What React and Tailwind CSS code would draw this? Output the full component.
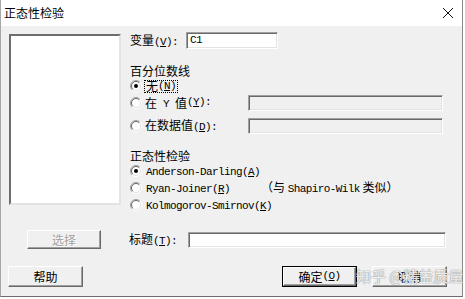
import React from "react";

const CJK = "[font-family:'Noto_Sans_CJK_SC','Liberation_Sans',sans-serif]";
const MONO = "[font-family:'Liberation_Mono','Noto_Sans_CJK_SC',monospace] text-[11px] tracking-[-0.6px]";

function A({ children }) {
  return <span className={MONO}>{children}</span>;
}
function U({ children }) {
  return <span className="underline underline-offset-[1px]">{children}</span>;
}

function Radio({ checked }) {
  return (
    <svg width="12" height="12" viewBox="0 0 12 12" className="shrink-0">
      <circle cx="6" cy="6" r="4.5" fill="#ffffff" />
      <path d="M 2.1 9.9 A 5.5 5.5 0 0 1 9.9 2.1" stroke="#a0a0a0" strokeWidth="1" fill="none" />
      <path d="M 9.9 2.1 A 5.5 5.5 0 0 1 2.1 9.9" stroke="#ffffff" strokeWidth="1" fill="none" />
      <path d="M 2.8 9.2 A 4.5 4.5 0 0 1 9.2 2.8" stroke="#696969" strokeWidth="1" fill="none" />
      <path d="M 9.2 2.8 A 4.5 4.5 0 0 1 2.8 9.2" stroke="#e3e3e3" strokeWidth="1" fill="none" />
      {checked && <circle cx="6" cy="6" r="2" fill="#000" />}
    </svg>
  );
}

const sunken =
  "border border-t-[#a0a0a0] border-l-[#a0a0a0] border-r-white border-b-white shadow-[inset_1px_1px_0_#696969,inset_-1px_-1px_0_#e3e3e3]";

function Btn({ children, w, disabled, def }) {
  const inner = (
    <div
      className={`h-full w-full flex items-center justify-center border border-t-white border-l-white border-r-[#696969] border-b-[#696969] shadow-[inset_-1px_-1px_0_#a0a0a0] bg-[#f0f0f0] text-[12px] ${
        disabled ? "text-[#a0a0a0] [text-shadow:1px_1px_0_#ffffff]" : "text-black"
      }`}
    >
      {children}
    </div>
  );
  return (
    <div className={`${w} h-full ${def ? "border border-black" : ""}`}>{inner}</div>
  );
}

export default function App() {
  return (
    <div className={`w-[465px] h-[299px] bg-white ${CJK} text-[12px] text-black leading-none`}>
      <div className="w-[463px] h-[297px] border-l border-r border-b border-l-[#a8a8a8] border-r-[#8a8a8a] border-b-[#6d6d6d] bg-[#f0f0f0] relative flex flex-col">
        {/* title bar */}
        <div className="h-[26px] bg-white flex items-center justify-between pl-[3px] pr-[8px] shrink-0">
          <span className="text-[12px]">正态性检验</span>
          <svg width="12" height="12" viewBox="0 0 12 12">
            <path d="M1 1 L11 11 M11 1 L1 11" stroke="#111" strokeWidth="1" />
          </svg>
        </div>

        {/* row A */}
        <div className="flex items-start mt-[6px] h-[186px]">
          <div className="ml-[8px] mt-[2px] w-[112px] h-[171px] bg-white border-2 border-t-[#6d6d6d] border-l-[#6d6d6d] border-r-[#e3e3e3] border-b-[#e3e3e3]" />
          <div className="ml-[9px] flex flex-col w-[316px]">
            <div className="h-[17px] flex items-center">
              <span className="w-[56px]">
                变量<A>(<U>V</U>):</A>
              </span>
              <div className={`w-[92px] h-[17px] bg-white ${sunken} flex items-center pl-[3px]`}>
                <span className={MONO}>C1</span>
              </div>
            </div>
            <div className="h-[14px] mt-[15px] flex items-center">百分位数线</div>
            <div className="h-[16px] flex items-center">
              <Radio checked />
              <span className="ml-[2px] px-[1px] border border-dotted border-black h-[13px] flex items-center">
                无<A>(<U>N</U>)</A>
              </span>
            </div>
            <div className="h-[17px] flex items-center">
              <Radio />
              <span className="ml-[3px] w-[103px] flex items-center">
                在<span className="ml-[6px]"><A>Y</A></span><span className="ml-[6px]">值</span><A>(<U>Y</U>):</A>
              </span>
              <div className={`w-[195px] h-[16px] bg-[#f0f0f0] ${sunken}`} />
            </div>
            <div className="h-[17px] mt-[6px] flex items-center">
              <Radio />
              <span className="ml-[3px] w-[103px]">
                在数据值<A>(<U>D</U>):</A>
              </span>
              <div className={`w-[195px] h-[16px] bg-[#f0f0f0] ${sunken}`} />
            </div>
            <div className="h-[15px] mt-[14px] flex items-center">正态性检验</div>
            <div className="h-[16px] flex items-center">
              <Radio checked />
              <span className="ml-[4px]">
                <A>
                  Anderson-Darling(<U>A</U>)
                </A>
              </span>
            </div>
            <div className="h-[17px] flex items-center">
              <Radio />
              <span className="ml-[4px]">
                <A>
                  Ryan-Joiner(<U>R</U>)
                </A>
              </span>
              <span className="ml-[31px]">
                （与 <A>Shapiro-Wilk</A> 类似）
              </span>
            </div>
            <div className="h-[17px] flex items-center">
              <Radio />
              <span className="ml-[4px]">
                <A>
                  Kolmogorov-Smirnov(<U>K</U>)
                </A>
              </span>
            </div>
          </div>
        </div>

        {/* row B */}
        <div className="flex items-center h-[19px] mt-[12px]">
          <div className="ml-[26px] h-[19px]">
            <Btn w="w-[74px]" disabled>
              选择
            </Btn>
          </div>
          <span className="ml-[28px] w-[59px]">
            标题<A>(<U>T</U>):</A>
          </span>
          <div className={`w-[258px] h-[16px] bg-white ${sunken}`} />
        </div>

        {/* row C */}
        <div className="flex items-center h-[21px] mt-[17px]">
          <div className="ml-[7px] h-[21px]">
            <Btn w="w-[75px]">帮助</Btn>
          </div>
          <div className="flex-1" />
          <div className="h-[21px]">
            <Btn w="w-[75px]" def>
              确定<A>(<U>O</U>)</A>
            </Btn>
          </div>
          <div className="ml-[15px] mr-[15px] h-[21px]">
            <Btn w="w-[75px]">取消</Btn>
          </div>
        </div>

        {/* watermark overlay */}
        <div className="absolute left-[355px] top-[268px] text-[15px] text-white/85 [text-shadow:0_0_1px_#8a8a8a,0_0_1px_#8a8a8a] whitespace-nowrap">
          知乎 @精益质量
        </div>
      </div>
    </div>
  );
}
